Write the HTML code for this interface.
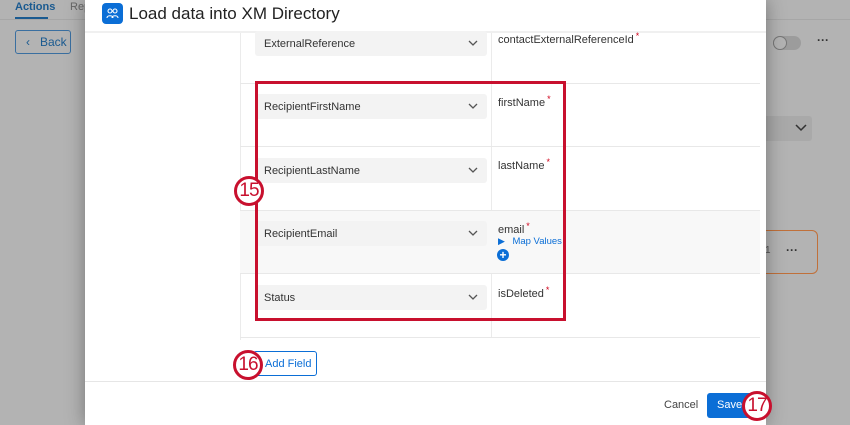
<!DOCTYPE html>
<html><head><meta charset="utf-8"><style>
*{box-sizing:border-box;margin:0;padding:0}
body{width:850px;height:425px;overflow:hidden;background:#b3b3b3;font-family:"Liberation Sans",sans-serif;position:relative;color:#222}
.a{position:absolute}
.dd{position:absolute;left:255px;width:232px;height:25px;background:#f3f3f3;border-radius:3px;font-size:11px;color:#333;padding:7px 9px 0}
.dd svg{position:absolute;right:9px;top:9px}
.rt{position:absolute;left:498px;font-size:11px;color:#333}
.rt i{color:#d0021b;font-style:normal;font-size:9px;vertical-align:4px;margin-left:2px}
.hl{position:absolute;left:240px;width:520px;height:1px;background:#e8e8e8}
.circ{position:absolute;width:30px;height:30px;border:3px solid #c8102e;border-radius:50%;background:#fff;color:#c8102e;font-size:19px;text-align:center;line-height:24px;letter-spacing:-1px}
</style></head><body>
<div class="a" style="left:0;top:19px;width:850px;height:1px;background:#a6a6a6"></div>
<div class="a" style="left:15px;top:1px;font-size:11px;font-weight:bold;color:#1a5a90">Actions</div>
<div class="a" style="left:15px;top:17px;width:33px;height:2px;background:#1a5a90"></div>
<div class="a" style="left:70px;top:1px;font-size:11px;color:#666">Rep</div>
<div class="a" style="left:15px;top:30px;width:56px;height:24px;border:1px solid #3a6fa0;border-radius:3px;font-size:12px;color:#1a5a90;padding:4px 0 0 10px">&lsaquo;&nbsp;&nbsp;&nbsp;Back</div>
<div class="a" style="left:773px;top:36px;width:28px;height:14px;border-radius:7px;background:#9c9c9c"></div>
<div class="a" style="left:773px;top:36px;width:14px;height:14px;border-radius:7px;background:#b3b3b3;border:1px solid #777"></div>
<div class="a" style="left:817px;top:33px;font-size:12px;font-weight:bold;color:#333">&middot;&middot;&middot;</div>
<div class="a" style="left:765px;top:116px;width:47px;height:25px;background:#a9a9a9;border-radius:0 3px 3px 0"></div>
<svg class="a" style="left:795px;top:124px" width="12" height="8"><path d="M1 1l5 5 5-5" stroke="#333" stroke-width="1.5" fill="none"/></svg>
<div class="a" style="left:755px;top:230px;width:63px;height:44px;border:1px solid #c0703a;border-left:none;border-radius:0 6px 6px 0"></div>
<div class="a" style="left:765px;top:245px;font-size:10px;color:#555">1</div>
<div class="a" style="left:786px;top:243px;font-size:12px;font-weight:bold;color:#333">&middot;&middot;&middot;</div>
<div class="a" style="left:85px;top:0;width:681px;height:425px;background:#fff;box-shadow:0 0 18px rgba(0,0,0,.35)"></div>
<div class="a" style="left:85px;top:31px;width:681px;height:2px;background:#f0f0f0"></div>
<div class="a" style="left:102px;top:3px;width:21px;height:21px;background:#0b6ed6;border-radius:4px"></div>
<svg class="a" style="left:106px;top:8px" width="13" height="11"><circle cx="4" cy="3" r="2" stroke="#fff" fill="none" stroke-width="1.1"/><circle cx="9" cy="3" r="2" stroke="#fff" fill="none" stroke-width="1.1"/><path d="M1 10c0-3 6-3 6 0M6 10c0-3 6-3 6 0" stroke="#fff" fill="none" stroke-width="1.1"/></svg>
<div class="a" style="left:129px;top:4px;font-size:17px;color:#222">Load data into XM Directory</div>
<div class="a" style="left:240px;top:33px;width:1px;height:307px;background:#ebebeb"></div>
<div class="a" style="left:491px;top:33px;width:1px;height:304px;background:#ebebeb"></div>
<div class="a" style="left:240px;top:210px;width:520px;height:63px;background:#f8f8f8"></div>
<div class="hl" style="top:83px"></div><div class="hl" style="top:146px"></div><div class="hl" style="top:210px"></div><div class="hl" style="top:273px"></div><div class="hl" style="top:337px"></div>
<div class="dd" style="top:31px">ExternalReference<svg width="10" height="7"><path d="M1 1l4 4 4-4" stroke="#555" stroke-width="1.3" fill="none"/></svg></div>
<div class="dd" style="top:94px">RecipientFirstName<svg width="10" height="7"><path d="M1 1l4 4 4-4" stroke="#555" stroke-width="1.3" fill="none"/></svg></div>
<div class="dd" style="top:158px">RecipientLastName<svg width="10" height="7"><path d="M1 1l4 4 4-4" stroke="#555" stroke-width="1.3" fill="none"/></svg></div>
<div class="dd" style="top:221px">RecipientEmail<svg width="10" height="7"><path d="M1 1l4 4 4-4" stroke="#555" stroke-width="1.3" fill="none"/></svg></div>
<div class="dd" style="top:285px">Status<svg width="10" height="7"><path d="M1 1l4 4 4-4" stroke="#555" stroke-width="1.3" fill="none"/></svg></div>
<div class="rt" style="top:31px">contactExternalReferenceId<i>*</i></div>
<div class="rt" style="top:94px">firstName<i>*</i></div>
<div class="rt" style="top:157px">lastName<i>*</i></div>
<div class="rt" style="top:221px">email<i>*</i></div>
<div class="a" style="left:498px;top:236px;font-size:9px;color:#0b6ed6">&#9654;&nbsp;&nbsp;&nbsp;<span style="font-size:9.5px">Map Values</span></div>
<div class="a" style="left:497px;top:249px;width:12px;height:12px;border-radius:50%;background:#0b6ed6;color:#fff;font-size:12px;line-height:12px;text-align:center;font-weight:bold">+</div>
<div class="rt" style="top:285px">isDeleted<i>*</i></div>
<div class="a" style="left:255px;top:81px;width:311px;height:240px;border:3px solid #c8102e"></div>
<div class="a" style="left:253px;top:351px;width:64px;height:25px;border:1px solid #0b6ed6;border-radius:3px;font-size:11px;color:#0b6ed6;padding:6px 0 0 11px">Add Field</div>
<div class="a" style="left:85px;top:381px;width:681px;height:1px;background:#e6e6e6"></div>
<div class="a" style="left:664px;top:399px;font-size:11px;color:#444">Cancel</div>
<div class="a" style="left:707px;top:393px;width:46px;height:25px;background:#0b6ed6;border-radius:3px;font-size:11px;color:#fff;padding:6px 0 0 10px">Save</div>
<div class="circ" style="left:234px;top:176px">15</div>
<div class="circ" style="left:233px;top:350px">16</div>
<div class="circ" style="left:742px;top:391px">17</div>
</body></html>
